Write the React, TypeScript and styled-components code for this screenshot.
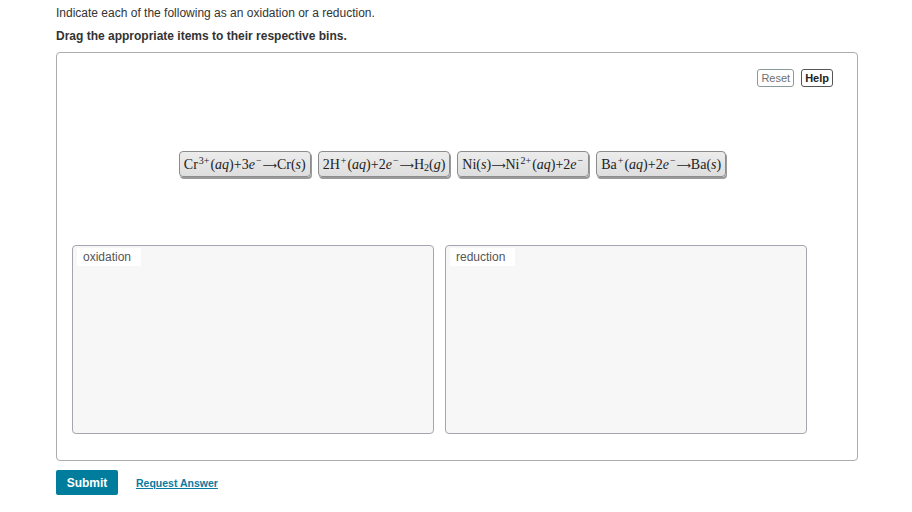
import React from 'react';
import styled, { createGlobalStyle } from 'styled-components';

const GlobalStyle = createGlobalStyle`
  body {
    margin: 0;
    background: #fff;
    font-family: "Liberation Sans", Arial, sans-serif;
  }
`;

const Page = styled.div`
  padding: 6px 54px 0 56px;
  width: 802px;
`;

const Prompt = styled.p`
  margin: 0;
  font-size: 12px;
  line-height: 14px;
  color: #333;
`;

const Instruction = styled.p`
  margin: 9px 0 9px;
  font-size: 12px;
  line-height: 14px;
  font-weight: bold;
  color: #333;
`;

const Panel = styled.div`
  border: 1px solid #acacac;
  border-radius: 4px;
  height: 409px;
  box-sizing: border-box;
  padding: 16px 24px 26px 15px;
  display: flex;
  flex-direction: column;
`;

const Toolbar = styled.div`
  display: flex;
  justify-content: flex-end;
  gap: 7px;
`;

const ToolButton = styled.button<{ $muted?: boolean }>`
  font-family: "Liberation Sans", Arial, sans-serif;
  font-size: 11px;
  font-weight: ${p => (p.$muted ? 'normal' : 'bold')};
  color: ${p => (p.$muted ? '#6f6f6f' : '#222')};
  background: #fff;
  border: 1px solid ${p => (p.$muted ? '#8a9a9a' : '#555')};
  border-radius: 3px;
  height: 18px;
  padding: 0 3px;
  line-height: 16px;
`;

const ChipRow = styled.div`
  display: flex;
  justify-content: center;
  gap: 7px;
  margin-top: 64px;
`;

const Chip = styled.div`
  font-family: "Liberation Serif", "Times New Roman", serif;
  font-size: 14px;
  color: #222;
  background: linear-gradient(#ececec, #dedede);
  border: 1px solid #8c8c8c;
  border-radius: 4px;
  box-shadow: 1px 2px 0 #9a9a9a;
  height: 26px;
  line-height: 25px;
  box-sizing: border-box;
  padding: 0 4px;
  white-space: nowrap;

  i {
    font-style: italic;
  }

  sup {
    font-size: 10px;
    line-height: 0;
    vertical-align: 5px;
    padding: 0 1px;
  }

  sub {
    font-size: 10px;
    line-height: 0;
    vertical-align: -2px;
  }
`;

const Arrow = styled.span`
  font-family: "DejaVu Sans", sans-serif;
  font-size: 10px;
`;

const Bins = styled.div`
  display: flex;
  gap: 11px;
  margin-top: 68px;
  flex: 1;
`;

const Bin = styled.div`
  width: 362px;
  background: #f7f7f7;
  border: 1px solid #a6a4b0;
  border-radius: 4px;
  box-sizing: border-box;
  padding: 1px 0 0 4px;
`;

const BinLabel = styled.span`
  display: inline-block;
  background: #fff;
  color: #555;
  font-size: 12px;
  line-height: 18px;
  padding: 0 10px 0 6px;
`;

const Footer = styled.div`
  display: flex;
  align-items: center;
  gap: 18px;
  margin-top: 9px;
`;

const SubmitButton = styled.button`
  font-family: "Liberation Sans", Arial, sans-serif;
  background: #007c9c;
  color: #fff;
  font-size: 12px;
  font-weight: bold;
  border: none;
  border-radius: 2px;
  width: 62px;
  height: 25px;
`;

const RequestLink = styled.a`
  font-size: 10.5px;
  font-weight: bold;
  color: #0b7aa0;
  text-decoration: underline;
  margin-top: 1px;
`;

const App: React.FC = () => {
  return (
    <Page>
      <GlobalStyle />
      <Prompt>Indicate each of the following as an oxidation or a reduction.</Prompt>
      <Instruction>Drag the appropriate items to their respective bins.</Instruction>

      <Panel>
        <Toolbar>
          <ToolButton $muted>Reset</ToolButton>
          <ToolButton>Help</ToolButton>
        </Toolbar>

        <ChipRow>
          <Chip>
            Cr<sup>3+</sup>(<i>aq</i>)+3<i>e</i><sup>−</sup><Arrow>⟶</Arrow>Cr(<i>s</i>)
          </Chip>
          <Chip>
            2H<sup>+</sup>(<i>aq</i>)+2<i>e</i><sup>−</sup><Arrow>⟶</Arrow>H<sub>2</sub>(<i>g</i>)
          </Chip>
          <Chip>
            Ni(<i>s</i>)<Arrow>⟶</Arrow>Ni<sup>2+</sup>(<i>aq</i>)+2<i>e</i><sup>−</sup>
          </Chip>
          <Chip>
            Ba<sup>+</sup>(<i>aq</i>)+2<i>e</i><sup>−</sup><Arrow>⟶</Arrow>Ba(<i>s</i>)
          </Chip>
        </ChipRow>

        <Bins>
          <Bin>
            <BinLabel>oxidation</BinLabel>
          </Bin>
          <Bin>
            <BinLabel>reduction</BinLabel>
          </Bin>
        </Bins>
      </Panel>

      <Footer>
        <SubmitButton>Submit</SubmitButton>
        <RequestLink href="#">Request Answer</RequestLink>
      </Footer>
    </Page>
  );
};

export default App;
